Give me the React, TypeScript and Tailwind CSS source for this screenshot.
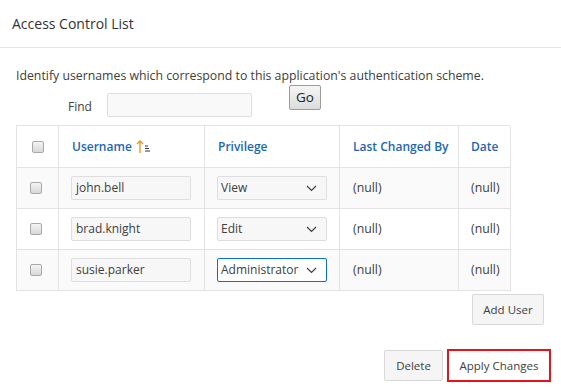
import React from 'react';

type Row = { user: string; privilege: string; focused?: boolean; shaded: boolean };

const rows: Row[] = [
  { user: 'john.bell', privilege: 'View', shaded: true },
  { user: 'brad.knight', privilege: 'Edit', shaded: false },
  { user: 'susie.parker', privilege: 'Administrator', focused: true, shaded: true },
];

function Checkbox() {
  return (
    <span className="block w-[12px] h-[12px] rounded-[2px] border border-[#a9a9a9] bg-gradient-to-b from-[#f4f4f4] to-[#d8d8d8]" />
  );
}

function Chevron() {
  return (
    <svg width="11" height="7" viewBox="0 0 11 7" fill="none" className="shrink-0">
      <path d="M1 1l4.5 4.5L10 1" stroke="#404040" strokeWidth="1.2" />
    </svg>
  );
}

function SortIcon() {
  return (
    <svg width="15" height="15" viewBox="0 0 15 15" fill="none" className="ml-[4px]">
      <path d="M4 14V2M1 5l3-3 3 3" stroke="#e49a2e" strokeWidth="1.4" />
      <path d="M9 7h3M9 9.5h4M9 12h5" stroke="#333" strokeWidth="1" />
    </svg>
  );
}

export default function App() {
  const cell = 'border-r border-b border-[#e3e3e3] flex items-center';
  const head = 'font-semibold text-[12px] text-[#1c66b6]';
  return (
    <div className="w-[561px] h-[387px] bg-white text-[#404040] font-['Open_Sans',sans-serif] text-[12.3px] overflow-hidden">
      <div className="h-[48px] border-b border-[#e6e6e6] pl-[12px] flex items-center">
        <h2 className="text-[14px] text-[#333]">Access Control List</h2>
      </div>

      <div className="pl-[16px] pt-[19px]">
        <p className="leading-[18px]">Identify usernames which correspond to this application's authentication scheme.</p>

        <div className="flex items-start h-[40px]">
          <span className="ml-[52px] mt-[14px] text-[12px] leading-[16px]">Find</span>
          <div className="ml-[15px] mt-[8px] w-[145px] h-[24px] rounded-[2px] border border-[#dedede] bg-[#f9f9f9]" />
          <button className="ml-[37px] mt-[0px] w-[32px] h-[25px] border border-[#9c9c9c] rounded-[2px] bg-gradient-to-b from-[#f6f6f6] to-[#dcdcdc] text-[13.5px] text-[#222] leading-none">
            Go
          </button>
        </div>

        <div className="w-[494px] grid grid-cols-[42px_146px_135px_119px_52px] border-l border-t border-[#e3e3e3]">
          <div className={`${cell} h-[42px] justify-center`}>
            <Checkbox />
          </div>
          <div className={`${cell} ${head} pl-[13px]`}>
            Username
            <SortIcon />
          </div>
          <div className={`${cell} ${head} pl-[13px]`}>Privilege</div>
          <div className={`${cell} ${head} pl-[13px]`}>Last Changed By</div>
          <div className={`${cell} ${head} pl-[12px]`}>Date</div>

          {rows.map((r) => {
            const bg = r.shaded ? 'bg-[#fafafa]' : 'bg-white';
            return (
              <React.Fragment key={r.user}>
                <div className={`${cell} ${bg} h-[41px] justify-center pr-[4px]`}>
                  <Checkbox />
                </div>
                <div className={`${cell} ${bg} pl-[12px] text-[12px]`}>
                  <div className="w-[120px] h-[24px] rounded-[2px] border border-[#dedede] bg-[#f7f7f7] pl-[4px] flex items-center">
                    {r.user}
                  </div>
                </div>
                <div className={`${cell} ${bg} pl-[12px] text-[12px]`}>
                  <div
                    className={`w-[110px] h-[24px] rounded-[2px] border pl-[3px] pr-[9px] flex items-center justify-between ${
                      r.focused ? 'border-[#0a6fd0] bg-white' : 'border-[#dedede] bg-[#f7f7f7]'
                    }`}
                  >
                    <span>{r.privilege}</span>
                    <Chevron />
                  </div>
                </div>
                <div className={`${cell} ${bg} pl-[13px]`}>(null)</div>
                <div className={`${cell} ${bg} pl-[12px]`}>(null)</div>
              </React.Fragment>
            );
          })}
        </div>

        <div className="w-[528px] flex justify-end mt-[3px]">
          <button className="w-[72px] h-[31px] border border-[#d8d8d8] rounded-[2px] bg-[#f5f5f5] text-[11.5px]">Add User</button>
        </div>

        <div className="w-[535px] flex justify-end gap-[4px] mt-[25px]">
          <button className="w-[59px] h-[31px] border border-[#d8d8d8] rounded-[2px] bg-[#f5f5f5] text-[11.5px]">Delete</button>
          <button className="w-[104px] h-[33px] -mt-[1px] border-2 border-[#e8141b] bg-white text-[11.5px]">Apply Changes</button>
        </div>
      </div>
    </div>
  );
}
